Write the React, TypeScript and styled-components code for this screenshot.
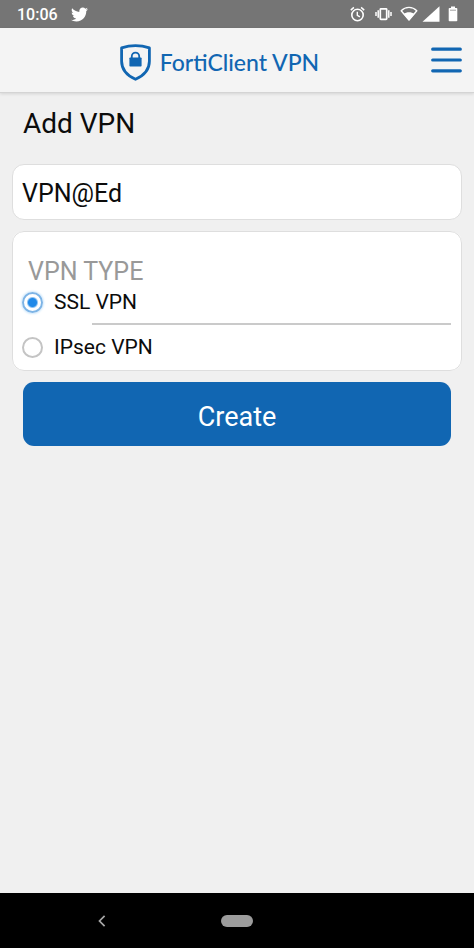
import React, { useState } from "react";
import styled, { createGlobalStyle } from "styled-components";
import { FaTwitter } from "react-icons/fa";

const BLUE = "#1166b2";

const GlobalStyle = createGlobalStyle`
  *, *::before, *::after { box-sizing: border-box; }
  body {
    margin: 0;
    background: #f0f0f0;
    color: #0c0c0c;
    font-family: Roboto, "Liberation Sans", sans-serif;
  }
  button, input { font-family: inherit; }
`;

const Screen = styled.div`
  display: flex;
  flex-direction: column;
  min-height: 100vh;
`;

const StatusBar = styled.div`
  display: flex;
  align-items: center;
  justify-content: space-between;
  height: 28px;
  padding: 0 16px 0 17px;
  background: #757575;
  color: #ffffff;
`;

const StatusGroup = styled.div<{ $gap: number }>`
  display: flex;
  align-items: center;
  gap: ${(p) => p.$gap}px;
`;

const Clock = styled.time`
  font-size: 16px;
  line-height: 28px;
  font-weight: 500;
  padding-top: 2px;
`;

const Header = styled.header`
  display: flex;
  align-items: center;
  height: 65px;
  padding: 0 12px 0 8px;
  background: #f4f4f4;
  border-bottom: 1px solid #d4d4d4;
  box-shadow: 0 1px 3px rgba(0, 0, 0, 0.12);
`;

const Brand = styled.div`
  display: flex;
  flex: 1;
  align-items: center;
  justify-content: center;
  gap: 9px;
  padding-top: 4px;
`;

const BrandName = styled.span`
  color: ${BLUE};
  font-family: Lato, "Open Sans", sans-serif;
  font-size: 23px;
  line-height: 36px;
  font-weight: 500;
`;

const MenuButton = styled.button`
  display: flex;
  padding: 0;
  border: 0;
  background: none;
  cursor: pointer;
`;

const Content = styled.main`
  flex: 1;
  padding: 13px 12px 24px;
`;

const PageTitle = styled.h1`
  margin: 0 0 22px;
  padding: 0 11px;
  font-size: 28px;
  line-height: 36px;
  font-weight: 400;
`;

const Form = styled.form`
  display: flex;
  flex-direction: column;
  gap: 11px;
`;

const NameInput = styled.input`
  width: 100%;
  height: 56px;
  padding: 2px 9px 0;
  border: 1px solid #dedede;
  border-radius: 12px;
  outline: none;
  background: #ffffff;
  color: inherit;
  font-size: 25px;
`;

const TypeCard = styled.fieldset`
  min-width: 0;
  margin: 0;
  padding: 23px 10px 9px 9px;
  border: 1px solid #dedede;
  border-radius: 12px;
  background: #ffffff;
`;

const TypeLegend = styled.legend`
  float: left;
  width: 100%;
  padding: 0 6px;
  color: #999999;
  font-size: 25px;
  line-height: 33px;
`;

const Option = styled.label`
  display: flex;
  clear: both;
  align-items: center;
  gap: 11px;
  height: 28px;
  font-size: 21px;
  cursor: pointer;
`;

const Radio = styled.input`
  appearance: none;
  flex: none;
  width: 21px;
  height: 21px;
  margin: 0;
  border: 2px solid #c4c4c4;
  border-radius: 50%;
  background: #ffffff;

  &:checked {
    border-color: #7db4e6;
    background: radial-gradient(circle, #2089e8 0 4px, #ffffff 6px);
    box-shadow: 0 0 2px 1px #d3eafc;
  }
`;

const Divider = styled.hr`
  height: 2px;
  margin: 7px 0 8px 70px;
  border: 0;
  background: #cacaca;
`;

const CreateButton = styled.button`
  height: 64px;
  margin: 0 11px;
  padding: 6px 0 0;
  border: 0;
  border-radius: 11px;
  background: ${BLUE};
  color: #ffffff;
  font-size: 27px;
  cursor: pointer;
`;

const NavBar = styled.nav`
  display: grid;
  grid-template-columns: 1fr auto 1fr;
  align-items: center;
  height: 55px;
  background: #000000;
`;

const NavButton = styled.button`
  display: flex;
  justify-self: center;
  padding: 0;
  border: 0;
  background: none;
  cursor: pointer;
`;

const BackButton = styled(NavButton)`
  padding: 8px 18px 8px 0;
`;

const HomePill = styled.span`
  width: 32px;
  height: 12px;
  border-radius: 6px;
  background: #9c9c9c;
`;

const AlarmIcon = () => (
  <svg width="15" height="16" viewBox="0 0 15 16" fill="none" stroke="currentColor" aria-hidden="true">
    <circle cx="7.5" cy="9" r="5.7" strokeWidth="1.6" />
    <path d="M7.3 5.7v3.6l2.6 1.6" strokeWidth="1.4" />
    <path d="M.8 4.1 3.9 1.4M14.2 4.1l-3.1-2.7" strokeWidth="1.5" />
  </svg>
);

const VibrateIcon = () => (
  <svg width="17" height="14" viewBox="0 0 17 14" fill="none" stroke="currentColor" strokeWidth="1.5" aria-hidden="true">
    <rect x="5.3" y="1.8" width="6.4" height="10.6" rx=".6" strokeWidth="1.7" />
    <path d="M3.2 3.2v7.6M1 5v4M13.8 3.2v7.6M16 5v4" />
  </svg>
);

const WifiIcon = () => (
  <svg width="18" height="16" viewBox="0 0 18 16" aria-hidden="true">
    <path d="M1.2 4.7C5.6.2 12.4.2 16.8 4.7L9 14Z" fill="none" stroke="currentColor" strokeWidth="1.4" strokeLinejoin="round" />
    <path d="M3.6 7.9C6.6 5.6 11.4 5.6 14.4 7.9L9 14.4Z" fill="currentColor" />
  </svg>
);

const SignalIcon = () => (
  <svg width="18" height="16" viewBox="0 0 18 16" aria-hidden="true">
    <path d="M17.5 .3v15.4H.5Z" fill="currentColor" />
  </svg>
);

const BatteryIcon = () => (
  <svg width="10" height="16" viewBox="0 0 10 16" aria-hidden="true">
    <path d="M3 .5h4V2h1.5q.8 0 .8.8v11.7q0 .8-.8.8h-7q-.8 0-.8-.8V2.8Q.7 2 1.5 2H3Z" fill="currentColor" />
    <path d="M2 4.2h6" stroke="#8c8c8c" strokeWidth=".8" />
  </svg>
);

const ShieldLogo = () => (
  <svg width="31" height="37" viewBox="0 0 31 37" aria-hidden="true">
    <path
      d="M1.6 3.9Q15.5-.8 29.4 3.9V17.2C29.4 26.6 23.2 31.8 15.5 35.3 7.8 31.8 1.6 26.6 1.6 17.2Z"
      fill="none"
      stroke={BLUE}
      strokeWidth="2.8"
      strokeLinejoin="round"
    />
    <rect x="9.4" y="13.4" width="12.2" height="9.2" rx=".8" fill={BLUE} />
    <path d="M11.8 14v-1.7a3.7 3.7 0 0 1 7.4 0V14" fill="none" stroke={BLUE} strokeWidth="1.8" />
  </svg>
);

const MenuIcon = () => (
  <svg width="31" height="26" viewBox="0 0 31 26" stroke={BLUE} strokeWidth="3.2" strokeLinecap="round" aria-hidden="true">
    <path d="M1.7 2.2h27.6M1.7 13h27.6M1.7 23.8h27.6" />
  </svg>
);

const BackIcon = () => (
  <svg width="8" height="12" viewBox="0 0 8 12" fill="none" stroke="#a8a8a8" strokeWidth="1.7" aria-hidden="true">
    <path d="M6.6.9 1.5 6l5.1 5.1" />
  </svg>
);

export default function App() {
  const [name, setName] = useState("VPN@Ed");
  const [type, setType] = useState("ssl");

  return (
    <>
      <GlobalStyle />
      <Screen>
        <StatusBar>
          <StatusGroup $gap={13}>
            <Clock>10:06</Clock>
            <FaTwitter size={17} aria-hidden="true" />
          </StatusGroup>
          <StatusGroup $gap={8}>
            <StatusGroup $gap={10}>
              <AlarmIcon />
              <VibrateIcon />
            </StatusGroup>
            <StatusGroup $gap={4}>
              <WifiIcon />
              <SignalIcon />
            </StatusGroup>
            <BatteryIcon />
          </StatusGroup>
        </StatusBar>
        <Header>
          <Brand>
            <ShieldLogo />
            <BrandName>FortiClient VPN</BrandName>
          </Brand>
          <MenuButton type="button" aria-label="Menu">
            <MenuIcon />
          </MenuButton>
        </Header>
        <Content>
          <PageTitle>Add VPN</PageTitle>
          <Form onSubmit={(e) => e.preventDefault()}>
            <NameInput aria-label="VPN name" value={name} onChange={(e) => setName(e.target.value)} />
            <TypeCard>
              <TypeLegend>VPN TYPE</TypeLegend>
              <Option>
                <Radio type="radio" name="type" checked={type === "ssl"} onChange={() => setType("ssl")} />
                SSL VPN
              </Option>
              <Divider />
              <Option>
                <Radio type="radio" name="type" checked={type === "ipsec"} onChange={() => setType("ipsec")} />
                IPsec VPN
              </Option>
            </TypeCard>
            <CreateButton type="submit">Create</CreateButton>
          </Form>
        </Content>
        <NavBar>
          <BackButton type="button" aria-label="Back">
            <BackIcon />
          </BackButton>
          <NavButton type="button" aria-label="Home">
            <HomePill />
          </NavButton>
        </NavBar>
      </Screen>
    </>
  );
}
